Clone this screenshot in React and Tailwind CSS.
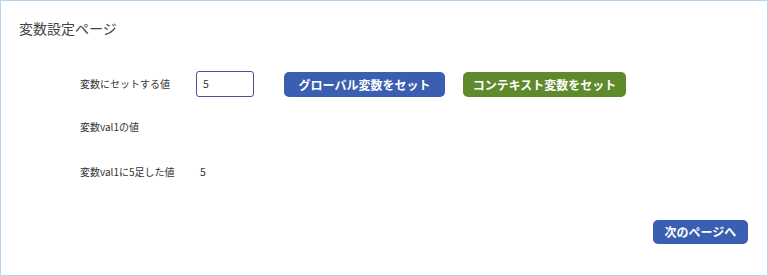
export default function App() {
  const font = { fontFamily: '"Noto Sans CJK JP", "Noto Sans", sans-serif' };
  return (
    <div className="w-[768px] h-[276px] bg-white border border-[#b9d3ee] box-border flex flex-col text-[#333333]" style={font}>
      <div className="pl-[18px] pt-[15px] text-[14px] leading-[24px] text-[#444444]">変数設定ページ</div>
      <div className="mt-[31px] pl-[79px] flex items-center h-[26px]">
        <div className="w-[116px] text-[10px] leading-[20px]">変数にセットする値</div>
        <div className="w-[58px] h-[26px] border-[1.5px] border-[#4b4f9c] rounded-[3px] flex items-center pl-[6px] text-[10.5px]">5</div>
        <button className="ml-[30px] w-[161px] h-[25px] rounded-[5px] bg-[#3b5fb0] text-white font-bold text-[12px] leading-[25px]">グローバル変数をセット</button>
        <button className="ml-[18px] w-[163px] h-[25px] rounded-[5px] bg-[#5f8a2c] text-white font-bold text-[12px] leading-[25px]">コンテキスト変数をセット</button>
      </div>
      <div className="mt-[20px] pl-[79px] text-[10px] leading-[20px]">変数val1の値</div>
      <div className="mt-[25px] pl-[79px] flex text-[10px] leading-[20px]">
        <div className="w-[120px]">変数val1に5足した値</div>
        <div className="text-[10.5px]">5</div>
      </div>
      <div className="mt-[38px] flex justify-end pr-[19px]">
        <button className="w-[95px] h-[24px] rounded-[5px] bg-[#3b5fb0] text-white font-bold text-[12px] leading-[24px]">次のページへ</button>
      </div>
    </div>
  );
}
